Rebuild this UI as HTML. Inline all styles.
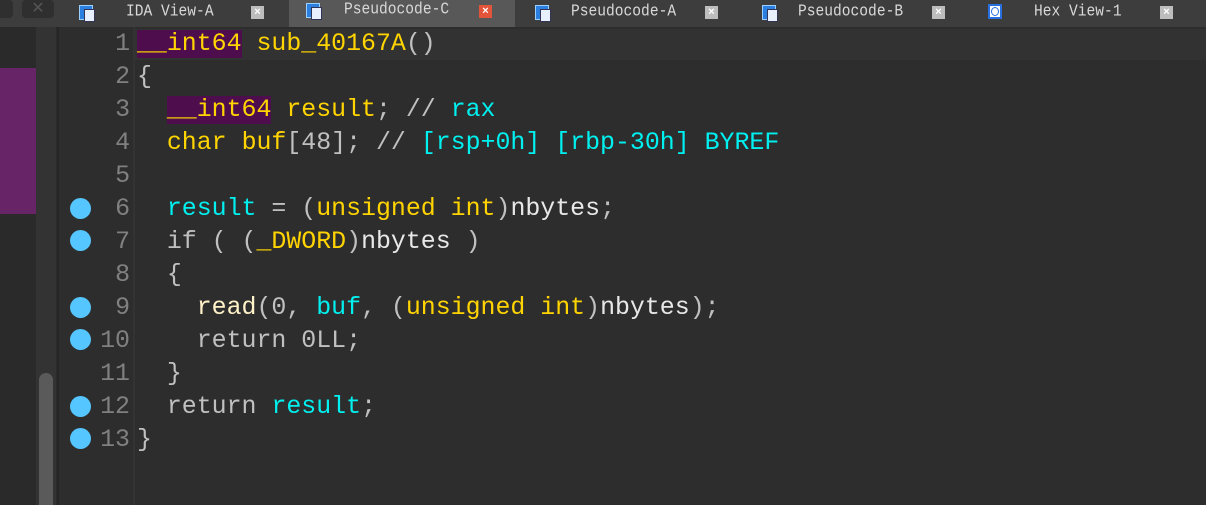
<!DOCTYPE html>
<html><head><meta charset="utf-8"><style>
*{margin:0;padding:0;box-sizing:border-box}
body{width:1206px;height:505px;background:#2d2d2d;overflow:hidden;position:relative;font-family:"Liberation Mono",monospace}
.tabbar{position:absolute;left:0;top:0;width:1206px;height:27px;background:#3d3d3d}
.act{position:absolute;left:289px;top:0;width:226px;height:27px;background:#585858}
.t{position:absolute;top:3px;color:#d8d8d8;font-family:"Liberation Mono",monospace;font-size:14.6px;line-height:18px;transform:scaleY(1.15);transform-origin:0 50%}
.ic{position:absolute;top:5px;width:14px;height:15px;background:#2a7fe0;border:1px solid #9cd0ff}
.ic::after{content:"";position:absolute;left:4px;top:3px;width:9px;height:11px;background:#e8f0ff;border:1px solid #335}
.cl{position:absolute;top:6px;width:13px;height:13px;background:#bdbdbd;color:#fff;font-size:11px;line-height:13px;text-align:center;font-family:"Liberation Sans",sans-serif;font-weight:bold}
.cl.red{background:#e2553b}
.left{position:absolute;left:0;top:27px;width:57px;height:478px;background:#2a2a2a}
.purple{position:absolute;left:0;top:68px;width:36px;height:146px;background:#672567}
.sb{position:absolute;left:36px;top:27px;width:20px;height:478px;background:#333}
.thumb{position:absolute;left:39px;top:373px;width:14px;height:132px;background:#5a5a5a;border-radius:7px 7px 0 0}
.sep{position:absolute;left:57px;top:27px;width:2px;height:478px;background:#262626}
.gsep{position:absolute;left:133px;top:27px;width:2px;height:478px;background:#333}
.cur{position:absolute;left:135px;top:29px;width:1071px;height:31px;background:#323232}
.ln{position:absolute;left:88px;width:42px;text-align:right;color:#808080;font-size:24.9px;line-height:33px}
.dot{position:absolute;left:70px;width:21px;height:21px;border-radius:50%;background:#55c6ff}
.code{position:absolute;left:137px;font-size:24.9px;line-height:33px;white-space:pre;color:#c0c0c0}
.y{color:#ffd400}.c{color:#00f0f0}.w{color:#e8e8e8}.r{color:#fff1c8}
.h{background:#4e0e4e}
</style></head><body>
<div class="tabbar">
 <div style="position:absolute;left:-4px;top:0;width:17px;height:18px;background:#2f2f2f;border-radius:4px"></div>
 <div style="position:absolute;left:22px;top:0;width:32px;height:18px;background:#2f2f2f;border-radius:4px;color:#555;text-align:center;font-family:'Liberation Sans';font-size:16px;line-height:18px">✕</div>
 <div class="act"></div>
 <div class="ic" style="left:79px"></div><span class="t" style="left:126px">IDA View-A</span><div class="cl" style="left:251px">×</div>
 <div class="ic" style="left:306px;top:3px"></div><span class="t" style="left:344px;top:1px">Pseudocode-C</span><div class="cl red" style="left:479px;top:5px">×</div>
 <div class="ic" style="left:535px"></div><span class="t" style="left:571px">Pseudocode-A</span><div class="cl" style="left:705px">×</div>
 <div class="ic" style="left:762px"></div><span class="t" style="left:798px">Pseudocode-B</span><div class="cl" style="left:932px">×</div>
 <div style="position:absolute;left:988px;top:4px;width:14px;height:15px;background:#fff;border:2px solid #2a6fe0"><div style="position:absolute;left:1px;top:1px;width:8px;height:9px;border:1.5px solid #2a6fe0;border-radius:50%"></div></div>
 <span class="t" style="left:1034px">Hex View-1</span><div class="cl" style="left:1160px">×</div>
</div>
<div class="left"></div><div class="purple"></div><div class="sb"></div><div class="thumb"></div><div class="sep"></div>
<div class="cur"></div><div class="gsep"></div>
<div class="ln" style="top:28px">1</div>
<div class="ln" style="top:61px">2</div>
<div class="ln" style="top:94px">3</div>
<div class="ln" style="top:127px">4</div>
<div class="ln" style="top:160px">5</div>
<div class="ln" style="top:193px">6</div>
<div class="ln" style="top:226px">7</div>
<div class="ln" style="top:259px">8</div>
<div class="ln" style="top:292px">9</div>
<div class="ln" style="top:325px">10</div>
<div class="ln" style="top:358px">11</div>
<div class="ln" style="top:391px">12</div>
<div class="ln" style="top:424px">13</div>
<div class="dot" style="top:198px"></div>
<div class="dot" style="top:230px"></div>
<div class="dot" style="top:297px"></div>
<div class="dot" style="top:329px"></div>
<div class="dot" style="top:396px"></div>
<div class="dot" style="top:428px"></div>
<div class="code" style="top:28px"><span class="y h">__int64</span> <span class="y">sub_40167A</span>()</div>
<div class="code" style="top:61px">{</div>
<div class="code" style="top:94px">  <span class="y h">__int64</span> <span class="y">result</span>; // <span class="c">rax</span></div>
<div class="code" style="top:127px">  <span class="y">char</span> <span class="y">buf</span>[48]; // <span class="c">[rsp+0h] [rbp-30h] BYREF</span></div>
<div class="code" style="top:193px">  <span class="c">result</span> = (<span class="y">unsigned int</span>)<span class="w">nbytes</span>;</div>
<div class="code" style="top:226px">  if ( (<span class="y">_DWORD</span>)<span class="w">nbytes</span> )</div>
<div class="code" style="top:259px">  {</div>
<div class="code" style="top:292px">    <span class="r">read</span>(0, <span class="c">buf</span>, (<span class="y">unsigned int</span>)<span class="w">nbytes</span>);</div>
<div class="code" style="top:325px">    return 0LL;</div>
<div class="code" style="top:358px">  }</div>
<div class="code" style="top:391px">  return <span class="c">result</span>;</div>
<div class="code" style="top:424px">}</div>
</body></html>
